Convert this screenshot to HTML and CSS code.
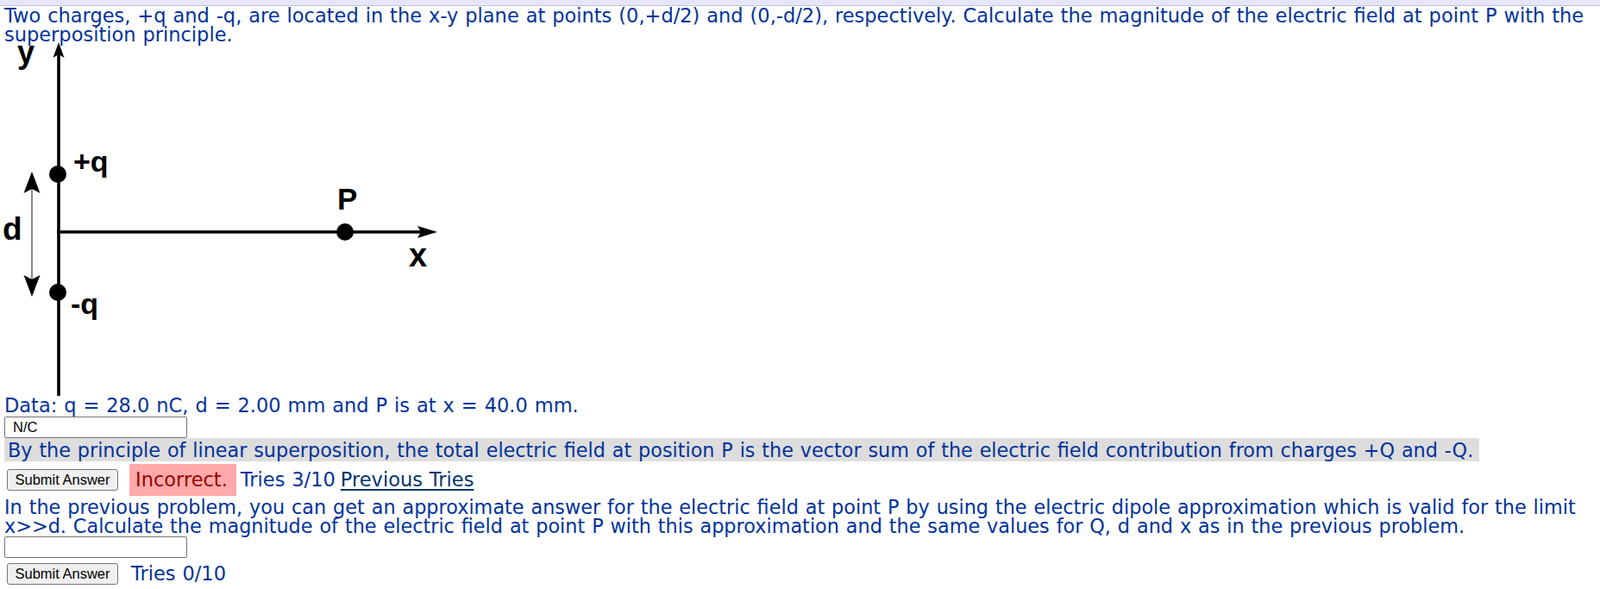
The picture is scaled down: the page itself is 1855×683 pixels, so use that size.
FILE: index.html
```html
<!DOCTYPE html>
<html>
<head>
<meta charset="utf-8">
<link rel="stylesheet" href="styles.css">
</head>
<body>
<div class="topbar"></div>
<div class="problem">
  <p class="text">Two charges, +q and -q, are located in the x-y plane at points (0,+d/2) and (0,-d/2), respectively. Calculate the magnitude of the electric field at point P with the<br>superposition principle.</p>
  <svg class="diagram" width="515" height="409" viewBox="5 51 515 409">
    <g class="axes">
      <line x1="68" y1="60" x2="68" y2="459"/>
      <line x1="66" y1="269" x2="490" y2="269"/>
    </g>
    <polygon class="ink" points="68,49 74.5,67 68,63 61.5,67"/>
    <polygon class="ink" points="507,269 484,262 488,269 484,276"/>
    <line class="dim" x1="37" y1="214" x2="37" y2="330"/>
    <polygon class="ink" points="37,199 46.5,224 37,219 27.5,224"/>
    <polygon class="ink" points="37,344 46.5,319 37,324 27.5,319"/>
    <circle class="ink" cx="67" cy="202" r="10"/>
    <circle class="ink" cx="67" cy="339" r="10"/>
    <circle class="ink" cx="400" cy="269" r="10"/>
    <text class="lbl" x="20" y="73" font-size="36">y</text>
    <text class="lbl" x="85" y="199" font-size="34">+q</text>
    <text class="lbl" x="82" y="364" font-size="34">-q</text>
    <text class="lbl" x="391" y="243" font-size="35">P</text>
    <text class="lbl" x="474" y="309" font-size="38">x</text>
    <text class="lbl" x="3" y="278" font-size="37">d</text>
  </svg>
  <p class="text">Data: q = 28.0 nC, d = 2.00 mm and P is at x = 40.0 mm.</p>
  <input class="answer" type="text" value="N/C">
  <div class="hint">By the principle of linear superposition, the total electric field at position P is the vector sum of the electric field contribution from charges +Q and -Q.</div>
  <div class="status">
    <button class="submit">Submit Answer</button>
    <span class="incorrect">Incorrect.</span>
    <span class="tries">Tries 3/10</span>
    <a class="prev" href="#">Previous Tries</a>
  </div>
  <p class="text text2">In the previous problem, you can get an approximate answer for the electric field at point P by using the electric dipole approximation which is valid for the limit<br>x&gt;&gt;d. Calculate the magnitude of the electric field at point P with this approximation and the same values for Q, d and x as in the previous problem.</p>
  <input class="answer" type="text" value="">
  <div class="status">
    <button class="submit">Submit Answer</button>
    <span class="tries tries0">Tries 0/10</span>
  </div>
</div>
</body>
</html>
```
FILE: styles.css
```css
html, body {
  margin: 0;
  padding: 0;
  background: #ffffff;
}
body {
  font-family: "DejaVu Sans", Verdana, sans-serif;
  font-size: 22.5px;
  word-spacing: 0.8px;
  color: #003399;
  overflow: hidden;
}
.topbar {
  height: 6px;
  background: #e6e6fa;
  border-bottom: 1px solid #c4c4d0;
}
.problem {
  padding: 1px 0 0 5px;
}
.text {
  margin: 0;
  line-height: 21.5px;
  white-space: nowrap;
}
.text2 {
  margin-top: 2px;
  font-size: 22.35px;
  line-height: 22px;
}
.diagram {
  display: block;
  overflow: visible;
}
.axes line {
  stroke: #000;
  stroke-width: 3.6;
}
.ink {
  fill: #000;
}
.dim {
  stroke: #8a8a8a;
  stroke-width: 2;
}
.lbl {
  font-family: "Liberation Sans", Arial, sans-serif;
  font-weight: bold;
  fill: #000;
}
.answer {
  display: block;
  box-sizing: border-box;
  width: 212px;
  height: 25px;
  margin: 1px 0 0 0;
  padding: 0 0 0 9px;
  border: 1px solid #767676;
  border-radius: 2px;
  font-family: "Liberation Sans", Arial, sans-serif;
  font-size: 16.5px;
  word-spacing: 0;
  color: #000;
  background: #fff;
}
.hint {
  display: inline-block;
  white-space: nowrap;
  background: #dddddd;
  font-size: 22.3px;
  padding: 2px 7px 0 4px;
  line-height: 25px;
}
.status {
  display: flex;
  align-items: center;
  height: 37px;
  margin-top: 3px;
  white-space: nowrap;
}
.answer + .status {
  margin-top: 0;
}
.submit {
  box-sizing: border-box;
  height: 25px;
  width: 129px;
  margin: 0 13px 0 3px;
  padding: 0;
  border: 1px solid #767676;
  border-radius: 3px;
  background: #efefef;
  font-family: "Liberation Sans", Arial, sans-serif;
  font-size: 16.5px;
  word-spacing: 0;
  color: #000;
}
.incorrect {
  background: #ffaaaa;
  color: #990000;
  line-height: 37px;
  padding: 0 10px 0 7px;
  margin-right: 5px;
}
.tries {
  margin-right: 6px;
}
.tries0 {
  margin-left: 2px;
}
.prev {
  color: #00346b;
  text-decoration: underline;
  text-underline-offset: 3px;
}
```
